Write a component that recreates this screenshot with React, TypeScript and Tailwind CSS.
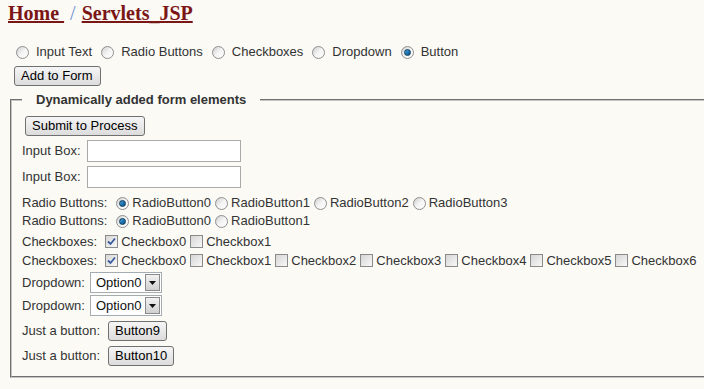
import React from 'react'

const FONT = { fontFamily: '"Liberation Sans", Arial, sans-serif' }

function Radio({ checked = false }: { checked?: boolean }) {
  return (
    <span className="relative inline-flex w-[13px] h-[13px] shrink-0 items-center justify-center rounded-full border border-[#8f8f8f] bg-gradient-to-br from-[#cfcfcf] via-[#f4f4f4] to-white">
      {checked && (
        <span className="w-[7px] h-[7px] rounded-full bg-gradient-to-br from-[#3fa3e0] to-[#074f85] border border-[#0b3a5e]" />
      )}
    </span>
  )
}

function Check({ checked = false }: { checked?: boolean }) {
  return (
    <span className="inline-flex w-[13px] h-[13px] shrink-0 items-center justify-center border border-[#8a8a8a] bg-gradient-to-br from-[#d6d6d6] to-[#f8f8f8]">
      {checked && (
        <svg width="9" height="9" viewBox="0 0 9 9">
          <path d="M1 4.5 L3.5 7 L8 1.5" fill="none" stroke="#3a5aa0" strokeWidth="1.8" />
        </svg>
      )}
    </span>
  )
}

function Btn({ children, className = '' }: { children: React.ReactNode; className?: string }) {
  return (
    <span
      className={`inline-flex h-[20px] items-center rounded-[3px] border border-[#707070] bg-gradient-to-b from-[#f6f6f6] to-[#dcdcdc] px-[6px] text-[13px] text-black ${className}`}
    >
      {children}
    </span>
  )
}

function Select() {
  return (
    <span className="inline-flex h-[21px] w-[72px] items-center justify-between border border-[#a5acb2] bg-white">
      <span className="pl-[5px] text-[13px] text-[#111]">Option0</span>
      <span className="mr-[1px] flex h-[17px] w-[15px] items-center justify-center border border-[#8a8a8a] bg-gradient-to-b from-[#f2f2f2] to-[#d0d0d0]">
        <svg width="7" height="4" viewBox="0 0 7 4">
          <path d="M0 0 H7 L3.5 4 Z" fill="#111" />
        </svg>
      </span>
    </span>
  )
}

export default function App() {
  return (
    <div className="min-h-screen overflow-hidden bg-[#fbfaf5] text-[13px] text-[#333]" style={FONT}>
      <div
        className="pl-[8px] pt-[1px] text-[20px] font-bold leading-[25px]"
        style={{ fontFamily: '"Liberation Serif", "DejaVu Serif", serif' }}
      >
        <span className="text-[#7b1616] underline decoration-[#7b1616]">Home </span>
        <span className="mx-[6px] font-normal text-[#6a8fd0]">/</span>
        <span className="text-[#7b1616] underline decoration-[#7b1616]">Servlets_JSP</span>
      </div>

      <div className="mt-[17px] flex h-[18px] items-center pl-[16px]">
        {['Input Text', 'Radio Buttons', 'Checkboxes', 'Dropdown', 'Button'].map((t, i) => (
          <span key={t} className="mr-[9px] flex items-center">
            <Radio checked={i === 4} />
            <span className="ml-[7px]">{t}</span>
          </span>
        ))}
      </div>

      <div className="mt-[5px] pl-[14px]">
        <Btn className="w-[87px]">Add to Form</Btn>
      </div>

      <fieldset className="mt-[6px] ml-[10px] w-[720px] border-2 border-[#c4c4c4] px-[10px] pb-[10px] [border-style:groove]">
        <legend className="px-[14px] text-[13px] font-bold leading-[16px] text-[#333]">
          Dynamically added form elements
        </legend>

        <div className="mt-[8px] pl-[3px]">
          <Btn>Submit to Process</Btn>
        </div>

        {[0, 1].map((i) => (
          <div key={i} className="mt-[4px] flex h-[22px] items-center">
            <span className="w-[65px]">Input Box:</span>
            <span className="h-[22px] w-[154px] border border-[#a9a9a9] bg-white" />
          </div>
        ))}

        <div className="mt-[6px] flex h-[18px] items-center">
          <span className="mr-[9px]">Radio Buttons:</span>
          {[0, 1, 2, 3].map((i) => (
            <span key={i} className="mr-[4px] flex items-center">
              <Radio checked={i === 0} />
              <span className="ml-[3px]">RadioButton{i}</span>
            </span>
          ))}
        </div>
        <div className="flex h-[18px] items-center">
          <span className="mr-[9px]">Radio Buttons:</span>
          {[0, 1].map((i) => (
            <span key={i} className="mr-[4px] flex items-center">
              <Radio checked={i === 0} />
              <span className="ml-[3px]">RadioButton{i}</span>
            </span>
          ))}
        </div>

        <div className="mt-[2px] flex h-[19px] items-center">
          <span className="mr-[8px]">Checkboxes:</span>
          {[0, 1].map((i) => (
            <span key={i} className="mr-[4px] flex items-center">
              <Check checked={i === 0} />
              <span className="ml-[3px]">Checkbox{i}</span>
            </span>
          ))}
        </div>
        <div className="flex h-[19px] items-center">
          <span className="mr-[8px]">Checkboxes:</span>
          {[0, 1, 2, 3, 4, 5, 6].map((i) => (
            <span key={i} className="mr-[4px] flex items-center">
              <Check checked={i === 0} />
              <span className="ml-[3px]">Checkbox{i}</span>
            </span>
          ))}
        </div>

        {[0, 1].map((i) => (
          <div key={i} className="mt-[2px] flex h-[21px] items-center">
            <span className="mr-[5px]">Dropdown:</span>
            <Select />
          </div>
        ))}

        {['Button9', 'Button10'].map((b) => (
          <div key={b} className="mt-[4px] flex h-[21px] items-center">
            <span className="mr-[8px]">Just a button:</span>
            <Btn>{b}</Btn>
          </div>
        ))}
      </fieldset>
    </div>
  )
}
